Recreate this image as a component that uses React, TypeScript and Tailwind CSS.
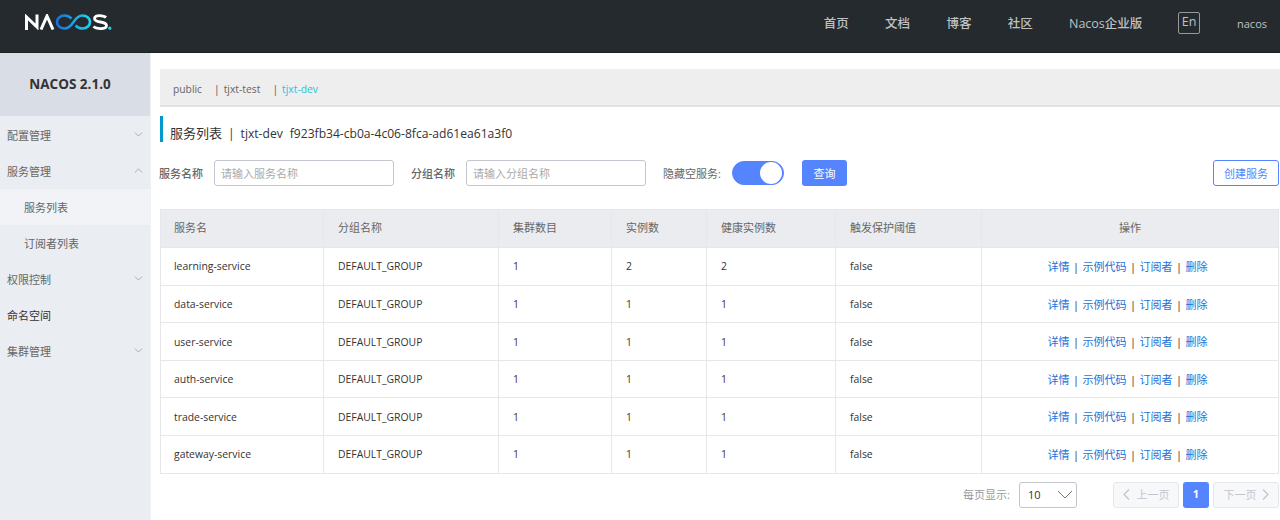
import { ChevronUp, ChevronDown } from "lucide-react";

const services = [
  { name: "learning-service", total: 2, healthy: 2 },
  { name: "data-service", total: 1, healthy: 1 },
  { name: "user-service", total: 1, healthy: 1 },
  { name: "auth-service", total: 1, healthy: 1 },
  { name: "trade-service", total: 1, healthy: 1 },
  { name: "gateway-service", total: 1, healthy: 1 },
];

const navLinks = ["首页", "文档", "博客", "社区"];

function Logo() {
  return (
    <svg width="88" height="16" viewBox="0 0 88 16" fill="none" className="ml-[24px] mb-[8px]">
      <defs>
        <linearGradient id="loop" x1="0" y1="0" x2="1" y2="0">
          <stop offset="0" stopColor="#1a6fd8" />
          <stop offset="1" stopColor="#1fd4f0" />
        </linearGradient>
      </defs>
      <path d="M2.5 16V3L13 13V0.5" stroke="#fff" strokeWidth="3" />
      <path d="M17 15.5L23 2L29 15.5" stroke="#fff" strokeWidth="3" />
      <path
        d="M47.5 4.5C45.5 2.5 43.5 1.5 40.5 1.5C36 1.5 33 4.5 33 8C33 11.5 36 14.5 40.5 14.5C45 14.5 47.5 11 49.5 8C51.5 5 54 1.5 58.5 1.5C63 1.5 66 4.5 66 8C66 11.5 63 14.5 58.5 14.5C55.5 14.5 53.5 13.5 51.5 11.5"
        stroke="url(#loop)"
        strokeWidth="2.6"
      />
      <path d="M82 3.5C80 1.5 70.5 0 70.5 4.5C70.5 9.5 82.5 6.5 82.5 11.5C82.5 16 72 15 69.5 12.5" stroke="#fff" strokeWidth="2.8" />
      <circle cx="85.8" cy="14.2" r="1.6" fill="#1fd4f0" />
    </svg>
  );
}

function Header() {
  return (
    <div className="h-[53px] bg-[#252a2f] flex items-center text-[#bfc2c4] text-[12.5px] font-medium border-b border-[#1d2125]">
      <Logo />
      <div className="ml-auto flex items-center pr-[14px] mb-[7px]">
        {navLinks.map((link) => (
          <span key={link} className="w-[61.3px] pt-[4px]">{link}</span>
        ))}
        <span className="w-[74px] mr-[35px] pt-[4px] whitespace-nowrap">Nacos企业版</span>
        <span className="w-[22px] h-[22px] border border-[#999] rounded-[2px] flex items-center justify-center mr-[37px]">En</span>
        <span className="w-[29px] pt-[4px] text-[11px]">nacos</span>
      </div>
    </div>
  );
}

function MenuItem({ label, open, sub, active, dark }: { label: string; open?: boolean; sub?: boolean; active?: boolean; dark?: boolean }) {
  return (
    <div className={`h-[36px] flex items-center pr-[5px] pt-[2px] text-[11px] ${sub ? "pl-[24px]" : "pl-[7px]"} ${active ? "bg-[#f2f3f7]" : ""} ${dark ? "text-[#333]" : "text-[#666]"}`}>
      <span>{label}</span>
      {open === true && <ChevronUp size={13} strokeWidth={1} className="ml-auto text-[#777] -translate-y-[2px]" />}
      {open === false && <ChevronDown size={13} strokeWidth={1} className="ml-auto text-[#777] -translate-y-[2px]" />}
    </div>
  );
}

function Sidebar() {
  return (
    <div className="w-[151px] shrink-0 bg-[#eaedf1] h-[467px] border-r border-[#f0f1f3]">
      <div className="h-[63px] bg-[#d9dde5] flex items-center justify-center pr-[10px] text-[13.5px] font-bold text-[#333]">NACOS 2.1.0</div>
      <div className="pt-[1px]">
        <MenuItem label="配置管理" open={false} />
        <MenuItem label="服务管理" open={true} />
        <MenuItem label="服务列表" sub active />
        <MenuItem label="订阅者列表" sub />
        <MenuItem label="权限控制" open={false} />
        <MenuItem label="命名空间" dark />
        <MenuItem label="集群管理" open={false} />
      </div>
    </div>
  );
}

function Namespaces() {
  return (
    <div className="h-[38px] bg-[#eeeeee] border-b-2 border-[#e2e2e2] flex items-center text-[10.3px] text-[#666] pl-[13px] pt-[6px]">
      <span>public</span>
      <span className="ml-[12px] text-[#555]">|</span>
      <span className="ml-[4px]">tjxt-test</span>
      <span className="ml-[12px] text-[#555]">|</span>
      <span className="ml-[4px] text-[#2dc1e0]">tjxt-dev</span>
    </div>
  );
}

function TitleBar() {
  return (
    <div className="mt-[9px] h-[26px] border-l-[3px] border-[#0099cc] pl-[7px] flex items-center text-[13px] text-[#333] pt-[10px]">
      <span>服务列表</span>
      <span className="ml-[6px] text-[12px]">|</span>
      <span className="ml-[6px] text-[12.1px]">tjxt-dev</span>
      <span className="ml-[7px] text-[12.1px]">f923fb34-cb0a-4c06-8fca-ad61ea61a3f0</span>
    </div>
  );
}

function SearchForm() {
  return (
    <div className="flex items-center h-[26px] mt-[18px] text-[11px] text-[#666]">
      <span className="w-[44px] -ml-[1px] pt-[2px] whitespace-nowrap font-medium">服务名称</span>
      <div className="ml-[11px] w-[180px] h-[26px] border border-[#c4c6cf] rounded-[3px] px-[6px] pt-[2px] flex items-center text-[#aaa]">请输入服务名称</div>
      <span className="ml-[17px] w-[44px] pt-[2px] whitespace-nowrap font-medium">分组名称</span>
      <div className="ml-[11px] w-[180px] h-[26px] border border-[#c4c6cf] rounded-[3px] px-[6px] pt-[2px] flex items-center text-[#aaa]">请输入分组名称</div>
      <span className="ml-[17px] w-[59px] pt-[2px] whitespace-nowrap">隐藏空服务:</span>
      <div className="ml-[10px] w-[52px] h-[24px] rounded-full bg-[#5584ff] border border-[#5584ff] flex items-center justify-end pr-[1px]">
        <div className="w-[22px] h-[22px] rounded-full bg-white" />
      </div>
      <div className="ml-[18px] w-[45px] h-[26px] bg-[#5584ff] rounded-[3px] pt-[2px] text-white flex items-center justify-center">查询</div>
      <div className="ml-auto mr-[1px] w-[66px] h-[26px] border border-[#5584ff] rounded-[3px] pt-[2px] text-[#5584ff] flex items-center justify-center">创建服务</div>
    </div>
  );
}

const cell = "border-r border-b border-[#e6e7eb] px-[14px] font-normal";
const latin = "text-[10.4px]";

function ServiceTable() {
  return (
    <table className="mt-[23px] w-[1119px] table-fixed border-t border-l border-[#e6e7eb] border-separate border-spacing-0 text-[11px] text-[#333]">
      <colgroup>
        <col className="w-[163px]" />
        <col className="w-[175px]" />
        <col className="w-[113px]" />
        <col className="w-[95px]" />
        <col className="w-[129px]" />
        <col className="w-[146px]" />
        <col />
      </colgroup>
      <thead>
        <tr className="h-[38px] bg-[#ebecf0] text-[#666]">
          <th className={`${cell} text-left pl-[13px]`}>服务名</th>
          <th className={`${cell} text-left`}>分组名称</th>
          <th className={`${cell} text-left`}>集群数目</th>
          <th className={`${cell} text-left`}>实例数</th>
          <th className={`${cell} text-left`}>健康实例数</th>
          <th className={`${cell} text-left`}>触发保护阈值</th>
          <th className={`${cell} text-center`}>操作</th>
        </tr>
      </thead>
      <tbody>
        {services.map((s) => (
          <tr key={s.name} className="h-[37.6px]">
            <td className={`${cell} ${latin} pl-[13px] pt-[2px]`}>{s.name}</td>
            <td className={`${cell} ${latin} pt-[2px]`}>DEFAULT_GROUP</td>
            <td className={`${cell} ${latin} pt-[2px]`}>1</td>
            <td className={`${cell} ${latin} pt-[2px]`}>{s.total}</td>
            <td className={`${cell} ${latin} pt-[2px]`}>{s.healthy}</td>
            <td className={`${cell} ${latin} pt-[2px]`}>false</td>
            <td className={`${cell} text-center text-[#1a73d9] pr-[19px] pt-[2px]`}>
              详情<span className="text-[#333] mx-[3.5px]">|</span>示例代码<span className="text-[#333] mx-[3.5px]">|</span>订阅者<span className="text-[#333] mx-[3.5px]">|</span>删除
            </td>
          </tr>
        ))}
      </tbody>
    </table>
  );
}

function Pagination() {
  return (
    <div className="flex items-center justify-end h-[26px] mt-[8px] mr-[1px] text-[11px]">
      <span className="text-[#999] pt-[2px] whitespace-nowrap">每页显示:</span>
      <div className="ml-[9px] w-[58px] h-[26px] border border-[#c4c6cf] rounded-[3px] flex items-center justify-between pl-[8px] pr-[2px] text-[#333]">
        <span className="pt-[2px]">10</span>
        <svg width="16" height="9" viewBox="0 0 16 9" fill="none" className="mr-[1px]">
          <path d="M1 1L8 8L15 1" stroke="#777" strokeWidth="1" />
        </svg>
      </div>
      <div className="ml-[36px] w-[66px] h-[26px] border border-[#e6e7eb] bg-[#f7f8fa] rounded-[3px] flex items-center justify-center gap-[7px] text-[#c4c6cf]">
        <svg width="7" height="11" viewBox="0 0 7 11" fill="none">
          <path d="M6 0.5L1 5.5L6 10.5" stroke="#c4c6cf" strokeWidth="1.3" />
        </svg>
        <span className="pt-[2px]">上一页</span>
      </div>
      <div className="ml-[4px] w-[26px] h-[26px] bg-[#5584ff] rounded-[3px] text-white font-bold flex items-center justify-center">1</div>
      <div className="ml-[4px] w-[66px] h-[26px] border border-[#e6e7eb] bg-[#f7f8fa] rounded-[3px] flex items-center justify-center gap-[5px] text-[#c4c6cf]">
        <span className="pt-[2px]">下一页</span>
        <svg width="7" height="11" viewBox="0 0 7 11" fill="none">
          <path d="M1 0.5L6 5.5L1 10.5" stroke="#c4c6cf" strokeWidth="1.3" />
        </svg>
      </div>
    </div>
  );
}

export default function App() {
  return (
    <div className="w-[1280px] h-[520px] overflow-hidden bg-white font-['Open_Sans','Noto_Sans_CJK_SC',sans-serif]">
      <Header />
      <div className="flex">
        <Sidebar />
        <div className="flex-1 pl-[9px] pt-[16px]">
          <Namespaces />
          <TitleBar />
          <SearchForm />
          <ServiceTable />
          <Pagination />
        </div>
      </div>
    </div>
  );
}
